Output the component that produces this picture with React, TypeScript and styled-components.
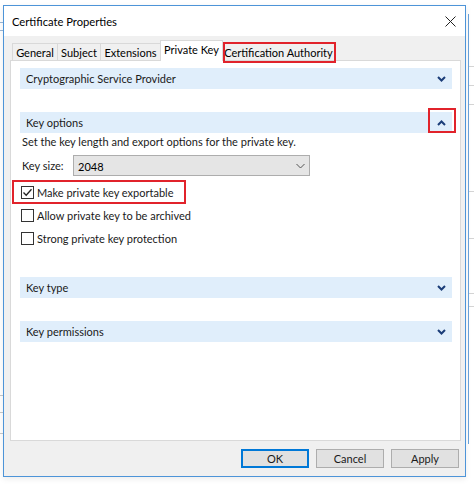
import React from "react";
import styled, { createGlobalStyle } from "styled-components";

const Global = createGlobalStyle`
  html, body { margin: 0; padding: 0; background: #ffffff; }
  body { font-family: Lato, "Liberation Sans", sans-serif; font-size: 11px; color: #000; }
`;

const RED = "#e1232b";
const NAVY = "#1b3d78";

const Desktop = styled.div`
  position: relative;
  width: 474px;
  height: 485px;
  overflow: hidden;
  background: #ffffff;
`;

// window sitting behind the dialog, only its edges show
const BackWindow = styled.div`
  position: absolute;
  top: 14px;
  left: 468px;
  width: 200px;
  height: 430px;
  border-left: 1px solid #6aa3dc;
  background: #ffffff;
  display: flex;
  flex-direction: column;
`;

const BackRow = styled.div<{ $h: number }>`
  height: ${(p) => p.$h}px;
  border-bottom: 1px solid #d4d4d4;
`;

const LeftStrip = styled.div`
  position: absolute;
  top: 0;
  left: 0;
  width: 3px;
  height: 485px;
  display: flex;
  flex-direction: column;
`;

const LeftLine = styled.div<{ $top: number; $c: string }>`
  margin-top: ${(p) => p.$top}px;
  height: 1px;
  background: ${(p) => p.$c};
`;

const Dialog = styled.div`
  position: absolute;
  top: 5px;
  left: 3px;
  width: 463px;
  height: 472px;
  box-sizing: border-box;
  border: 1px solid #4d94d8;
  background: #f0f0f0;
  display: flex;
  flex-direction: column;
  box-shadow: 0 2px 6px rgba(0, 0, 0, 0.08);
`;

const TitleBar = styled.div`
  height: 30px;
  background: #ffffff;
  display: flex;
  align-items: center;
  justify-content: space-between;
  padding: 0 5px 0 8px;
  flex-shrink: 0;
`;

const TitleText = styled.span`
  font-size: 11.2px;
  color: #000;
`;

const CloseButton = styled.div`
  width: 20px;
  height: 20px;
  display: flex;
  align-items: center;
  justify-content: center;
`;

const Body = styled.div`
  flex: 1;
  display: flex;
  flex-direction: column;
  padding: 4px 4px 8px 6px;
`;

const TabStrip = styled.div`
  display: flex;
  align-items: flex-end;
  padding-left: 3px;
  margin-bottom: -1px;
  position: relative;
  z-index: 1;
`;

const Tab = styled.div<{ $active?: boolean; $w: number; $hl?: boolean }>`
  position: relative;
  box-sizing: border-box;
  width: ${(p) => p.$w}px;
  height: ${(p) => (p.$active ? 21 : 18)}px;
  margin-left: -1px;
  padding-top: ${(p) => (p.$active ? 2 : 1)}px;
  border: 1px solid #d9d9d9;
  border-bottom: ${(p) => (p.$active ? "none" : "1px solid #d9d9d9")};
  background: ${(p) => (p.$active ? "#ffffff" : "#f0f0f0")};
  display: flex;
  justify-content: center;
  align-items: ${(p) => (p.$active ? "flex-start" : "center")};
  white-space: nowrap;
  ${(p) => p.$active && "z-index: 2;"}
  &::after {
    content: "";
    display: ${(p) => (p.$hl ? "block" : "none")};
    position: absolute;
    left: 0;
    right: -2px;
    top: -2px;
    bottom: -3px;
    border: 2px solid ${RED};
  }
`;

const Pane = styled.div`
  flex: 1;
  background: #ffffff;
  border: 1px solid #d9d9d9;
  display: flex;
  flex-direction: column;
  padding: 0 8px 0 9px;
`;

const Section = styled.div<{ $top: number }>`
  margin-top: ${(p) => p.$top}px;
  display: flex;
  flex-direction: column;
`;

const Band = styled.div`
  height: 21px;
  background: #e0eefb;
  display: flex;
  align-items: center;
  justify-content: space-between;
  padding-left: 6px;
`;

const BandTitle = styled.span`
  color: #1a1a1a;
`;

const ChevronSlot = styled.div<{ $hl?: boolean }>`
  position: relative;
  width: 20px;
  align-self: stretch;
  display: flex;
  align-items: center;
  justify-content: center;
  margin-right: 1px;
  &::after {
    content: "";
    display: ${(p) => (p.$hl ? "block" : "none")};
    position: absolute;
    left: -3px;
    right: -5px;
    top: -4px;
    bottom: 0;
    border: 2px solid ${RED};
  }
`;

const Options = styled.div`
  display: flex;
  flex-direction: column;
  padding-left: 2px;
`;

const Description = styled.div`
  height: 15px;
  line-height: 15px;
  margin-top: 1px;
  color: #1a1a1a;
`;

const FieldRow = styled.div`
  display: flex;
  align-items: center;
  margin-top: 6px;
  height: 21px;
`;

const FieldLabel = styled.span`
  width: 51px;
  color: #1a1a1a;
`;

const Select = styled.div`
  box-sizing: border-box;
  width: 237px;
  height: 21px;
  background: #e5e5e5;
  border: 1px solid #adadad;
  display: flex;
  align-items: center;
  justify-content: space-between;
  padding: 1px 4px 0 4px;
`;

const CheckList = styled.div`
  display: flex;
  flex-direction: column;
  margin-top: 5px;
  align-items: flex-start;
`;

const CheckRow = styled.label<{ $hl?: boolean }>`
  position: relative;
  height: 23px;
  display: inline-flex;
  align-items: center;
  gap: 3px;
  margin-left: -1px;
  color: #1a1a1a;
  &::after {
    content: "";
    display: ${(p) => (p.$hl ? "block" : "none")};
    position: absolute;
    left: -9px;
    right: -13px;
    top: -1px;
    bottom: 0;
    border: 2px solid ${RED};
  }
`;

const Box = styled.span`
  box-sizing: border-box;
  width: 13px;
  height: 13px;
  border: 1px solid #333333;
  background: #ffffff;
  display: flex;
  align-items: center;
  justify-content: center;
`;

const Buttons = styled.div`
  display: flex;
  justify-content: flex-end;
  gap: 7px;
  margin-top: 8px;
  padding-right: 2px;
`;

const Button = styled.div<{ $default?: boolean }>`
  box-sizing: border-box;
  width: 68px;
  height: 19px;
  background: #e1e1e1;
  border: 1px solid ${(p) => (p.$default ? "#0078d7" : "#adadad")};
  box-shadow: ${(p) => (p.$default ? "inset 0 0 0 1px #0078d7" : "none")};
  display: flex;
  align-items: center;
  justify-content: center;
  color: #1a1a1a;
`;

const Chevron = ({ up }: { up?: boolean }) => (
  <svg width="9" height="6" viewBox="0 0 9 6">
    <path
      d={up ? "M1 5 L4.5 1.5 L8 5" : "M1 1 L4.5 4.5 L8 1"}
      fill="none"
      stroke={NAVY}
      strokeWidth="2"
    />
  </svg>
);

const SectionHead = ({ title, up, hl }: { title: string; up?: boolean; hl?: boolean }) => (
  <Band>
    <BandTitle>{title}</BandTitle>
    <ChevronSlot $hl={hl}>
      <Chevron up={up} />
    </ChevronSlot>
  </Band>
);

const Check = ({ label, checked, hl }: { label: string; checked?: boolean; hl?: boolean }) => (
  <CheckRow $hl={hl}>
    <Box>
      {checked && (
        <svg width="11" height="11" viewBox="0 0 11 11">
          <path d="M1.5 5.5 L4.2 8.3 L9.5 2.2" fill="none" stroke="#222" strokeWidth="1.3" />
        </svg>
      )}
    </Box>
    {label}
  </CheckRow>
);

const tabs = [
  { label: "General", w: 46 },
  { label: "Subject", w: 44 },
  { label: "Extensions", w: 61 },
  { label: "Private Key", w: 63, active: true },
  { label: "Certification Authority", w: 113, hl: true },
];

export default function App() {
  return (
    <>
      <Global />
      <Desktop>
        <LeftStrip>
          <LeftLine $top={22} $c="#9bb7d6" />
          <LeftLine $top={7} $c="#9bb7d6" />
          <LeftLine $top={364} $c="#c8c8c8" />
          <LeftLine $top={16} $c="#c8c8c8" />
          <LeftLine $top={20} $c="#c8c8c8" />
        </LeftStrip>

        <BackWindow>
          <BackRow $h={52} />
          <BackRow $h={18} />
          <BackRow $h={18} />
          <BackRow $h={86} />
          <BackRow $h={46} />
          <BackRow $h={54} />
          <BackRow $h={12} />
        </BackWindow>

        <Dialog>
          <TitleBar>
            <TitleText>Certificate Properties</TitleText>
            <CloseButton>
              <svg width="11" height="11" viewBox="0 0 11 11">
                <path d="M0.5 0.5 L10.5 10.5 M10.5 0.5 L0.5 10.5" stroke="#222" strokeWidth="1" />
              </svg>
            </CloseButton>
          </TitleBar>

          <Body>
            <TabStrip>
              {tabs.map((t) => (
                <Tab key={t.label} $w={t.w} $active={t.active} $hl={t.hl}>
                  {t.label}
                </Tab>
              ))}
            </TabStrip>

            <Pane>
              <Section $top={7}>
                <SectionHead title="Cryptographic Service Provider" />
              </Section>

              <Section $top={23}>
                <SectionHead title="Key options" up hl />
                <Options>
                  <Description>Set the key length and export options for the private key.</Description>
                  <FieldRow>
                    <FieldLabel>Key size:</FieldLabel>
                    <Select>
                      <span>2048</span>
                      <svg width="9" height="6" viewBox="0 0 9 6">
                        <path d="M0.5 1 L4.5 5 L8.5 1" fill="none" stroke="#555" strokeWidth="1" />
                      </svg>
                    </Select>
                  </FieldRow>
                  <CheckList>
                    <Check label="Make private key exportable" checked hl />
                    <Check label="Allow private key to be archived" />
                    <Check label="Strong private key protection" />
                  </CheckList>
                </Options>
              </Section>

              <Section $top={27}>
                <SectionHead title="Key type" />
              </Section>

              <Section $top={23}>
                <SectionHead title="Key permissions" />
              </Section>
            </Pane>

            <Buttons>
              <Button $default>OK</Button>
              <Button>Cancel</Button>
              <Button>Apply</Button>
            </Buttons>
          </Body>
        </Dialog>
      </Desktop>
    </>
  );
}
